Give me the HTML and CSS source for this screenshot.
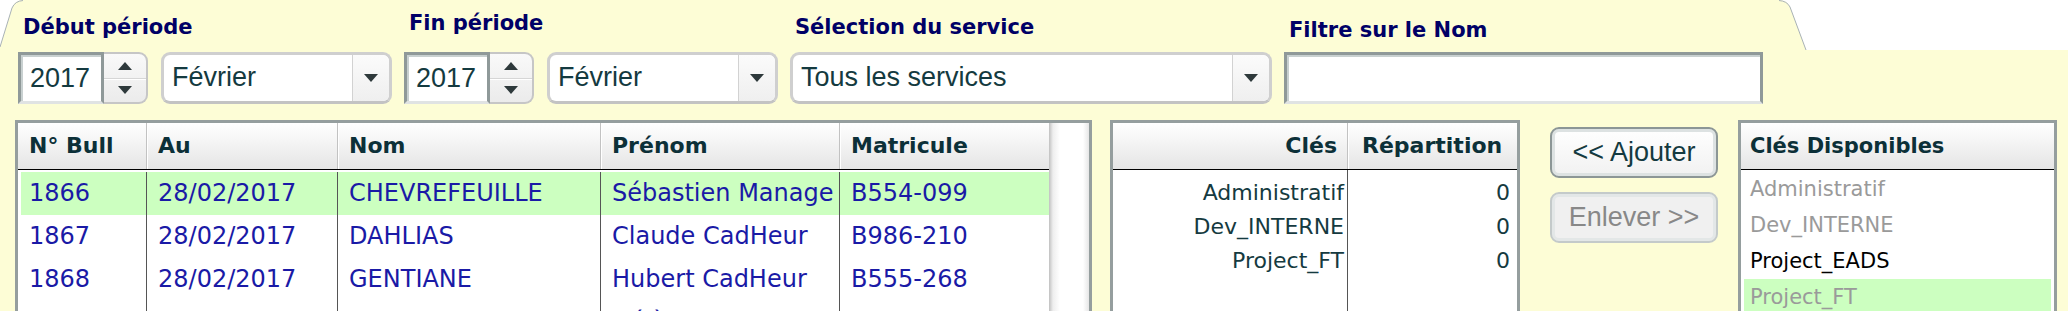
FILE: index.html
```html
<!DOCTYPE html>
<html lang="fr">
<head>
    <meta charset="UTF-8">
    <title>Bulletins - Répartition des clés</title>
    <link rel="stylesheet" href="styles.css">
</head>
<body>

<div class="page">
    <svg class="tab" width="2068" height="311" viewBox="0 0 2068 311">
        <path class="tab-fill" d="M0,47 L12,8 Q15,0 23,0 L1779,0 Q1787,0 1790,7 L1806,50 L2068,50 L2068,311 L0,311 Z"/>
        <path class="tab-edge" d="M0,47 L12,8 Q15,1 23,0.5 M1779,0.5 Q1787,1 1790,7 L1806,50"/>
    </svg>

    <div class="filters">
        <div class="field">
            <label class="field-label">Début période</label>
            <div class="field-controls">
                <div class="spinner">
                    <input class="inset-input spinner-input" type="text" value="2017">
                    <div class="spinner-buttons">
                        <span class="spin-up"></span>
                        <span class="spin-down"></span>
                    </div>
                </div>
                <div class="select select-month">
                    <span class="select-value">Février</span>
                    <span class="select-arrow"></span>
                </div>
            </div>
        </div>

        <div class="field">
            <label class="field-label label-high">Fin période</label>
            <div class="field-controls">
                <div class="spinner">
                    <input class="inset-input spinner-input" type="text" value="2017">
                    <div class="spinner-buttons">
                        <span class="spin-up"></span>
                        <span class="spin-down"></span>
                    </div>
                </div>
                <div class="select select-month">
                    <span class="select-value">Février</span>
                    <span class="select-arrow"></span>
                </div>
            </div>
        </div>

        <div class="field">
            <label class="field-label">Sélection du service</label>
            <div class="field-controls">
                <div class="select select-service">
                    <span class="select-value">Tous les services</span>
                    <span class="select-arrow"></span>
                </div>
            </div>
        </div>

        <div class="field">
            <label class="field-label label-low">Filtre sur le Nom</label>
            <div class="field-controls">
                <input class="inset-input filter-input" type="text" value="">
            </div>
        </div>
    </div>

    <div class="lists">
        <div class="grid bull-grid">
            <div class="bull-main">
                <div class="bull-head">
                    <div class="head-cell">N° Bull</div>
                    <div class="head-cell">Au</div>
                    <div class="head-cell">Nom</div>
                    <div class="head-cell">Prénom</div>
                    <div class="head-cell">Matricule</div>
                </div>
                <div class="bull-body">
                    <div class="bull-row selected">
                        <div>1866</div><div>28/02/2017</div><div>CHEVREFEUILLE</div><div>Sébastien Manage</div><div>B554-099</div>
                    </div>
                    <div class="bull-row">
                        <div>1867</div><div>28/02/2017</div><div>DAHLIAS</div><div>Claude CadHeur</div><div>B986-210</div>
                    </div>
                    <div class="bull-row">
                        <div>1868</div><div>28/02/2017</div><div>GENTIANE</div><div>Hubert CadHeur</div><div>B555-268</div>
                    </div>
                    <div class="bull-row">
                        <div></div><div></div><div></div><div>Hélène Manage</div><div></div>
                    </div>
                </div>
            </div>
            <div class="scrollbar"></div>
        </div>

        <div class="grid cles-grid">
            <div class="cles-head">
                <div class="head-cell head-right">Clés</div>
                <div class="head-cell head-rep">Répartition</div>
            </div>
            <div class="cles-body">
                <div class="cles-col col-key">
                    <div>Administratif</div>
                    <div>Dev_INTERNE</div>
                    <div>Project_FT</div>
                </div>
                <div class="cles-col col-value">
                    <div>0</div>
                    <div>0</div>
                    <div>0</div>
                </div>
            </div>
        </div>

        <div class="actions">
            <button class="btn">&lt;&lt; Ajouter</button>
            <button class="btn btn-disabled" disabled>Enlever &gt;&gt;</button>
        </div>

        <div class="grid dispo-grid">
            <div class="dispo-head">Clés Disponibles</div>
            <div class="dispo-body">
                <div class="dispo-item used">Administratif</div>
                <div class="dispo-item used">Dev_INTERNE</div>
                <div class="dispo-item">Project_EADS</div>
                <div class="dispo-item used selected">Project_FT</div>
            </div>
        </div>
    </div>
</div>

</body>
</html>
```

FILE: styles.css
```css
* {
    box-sizing: border-box;
}

html, body {
    margin: 0;
    padding: 0;
    overflow: hidden;
    background: #fff;
}

body {
    font-family: "DejaVu Sans", Verdana, sans-serif;
    font-size: 22px;
}

.page {
    position: relative;
    z-index: 0;
    width: 2068px;
    height: 311px;
    overflow: hidden;
}

.tab {
    position: absolute;
    top: 0;
    left: 0;
    z-index: -1;
}

.tab-fill {
    fill: #fdfdd6;
}

.tab-edge {
    fill: none;
    stroke: #a9b2b6;
    stroke-width: 1;
}

/* filters */

.filters {
    display: flex;
    gap: 12px;
    padding: 15px 0 0 18px;
}

.field-label {
    display: block;
    padding-left: 5px;
    margin-bottom: 12px;
    font-size: 21px;
    line-height: 25px;
    font-weight: bold;
    color: #000066;
}

.label-high {
    margin-top: -4px;
    margin-bottom: 16px;
}

.label-low {
    margin-top: 3px;
    margin-bottom: 9px;
}

.field-controls {
    display: flex;
    gap: 13px;
}

.inset-input {
    height: 52px;
    margin: 0;
    border: 3px solid #8f9999;
    border-bottom-color: #e0e3e3;
    box-shadow: inset 0 2px 0 #c8d0d0, inset 2px 0 0 #c8d0d0;
    background: #fff;
    font-family: "Liberation Sans", Arial, sans-serif;
    font-size: 27px;
    color: #143a40;
    outline: none;
}

.spinner {
    display: flex;
    width: 130px;
    height: 52px;
}

.spinner-input {
    width: 86px;
    padding: 0 0 0 9px;
}

.spinner-buttons {
    width: 44px;
    display: flex;
    flex-direction: column;
    border: 2px solid #c6c6c6;
    border-left: none;
    border-radius: 0 9px 9px 0;
    background: linear-gradient(#f9f9f9, #ebebeb);
    overflow: hidden;
}

.spinner-buttons span {
    flex: 1;
    display: flex;
    align-items: center;
    justify-content: center;
}

.spin-up {
    border-bottom: 1px solid #d6d6d6;
    box-shadow: 0 1px 0 #fff;
}

.spin-up::before,
.spin-down::before,
.select-arrow::before {
    content: "";
    width: 0;
    height: 0;
    border-left: 7px solid transparent;
    border-right: 7px solid transparent;
}

.spin-up::before {
    border-bottom: 8px solid #2e393b;
}

.spin-down::before {
    border-top: 8px solid #2e393b;
}

.select {
    display: flex;
    height: 52px;
    border: 3px solid #cfcfcf;
    border-bottom-color: #c3c3c3;
    border-radius: 9px;
    background: #fff;
    overflow: hidden;
}

.select-month {
    width: 231px;
}

.select-service {
    width: 482px;
}

.select-value {
    flex: 1;
    padding-left: 8px;
    font-family: "Liberation Sans", Arial, sans-serif;
    font-size: 27px;
    line-height: 45px;
    color: #143a40;
    white-space: nowrap;
}

.select-arrow {
    width: 37px;
    display: flex;
    align-items: center;
    justify-content: center;
    border-left: 1px solid #d2d2d2;
    background: linear-gradient(#fbfbfb, #efefef);
}

.select-arrow::before {
    border-top: 8px solid #2e393b;
}

.filter-input {
    width: 479px;
    padding: 0 8px;
}

/* lists */

.lists {
    display: flex;
    align-items: flex-start;
    padding-left: 15px;
    margin-top: 16px;
}

.grid {
    height: 240px;
    border: 3px solid #959e9e;
    background: #fff;
}

.head-cell {
    height: 46px;
    line-height: 46px;
    padding-left: 11px;
    font-weight: bold;
    color: #0c3038;
    white-space: nowrap;
    border-right: 1px solid #c2c2c2;
    box-shadow: 1px 0 0 #fff;
}

.head-cell:last-child {
    border-right: none;
    box-shadow: none;
}

.bull-grid {
    display: flex;
    width: 1077px;
}

.bull-main {
    width: 1031px;
}

.bull-head,
.cles-head,
.dispo-head {
    background: linear-gradient(#ffffff, #e5e5e5);
    border-bottom: 1px solid #000;
}

.bull-head {
    display: grid;
    grid-template-columns: 129px 191px 263px 239px 209px;
}

.bull-body {
    padding-top: 2px;
}

.bull-row {
    display: grid;
    grid-template-columns: 126px 191px 263px 239px 209px;
    margin-left: 3px;
    height: 43px;
    line-height: 43px;
    font-size: 24px;
    color: #1a1aa6;
}

.bull-row div {
    padding-left: 11px;
    border-right: 1px solid #555;
    white-space: nowrap;
    overflow: hidden;
}

.bull-row div:first-child {
    padding-left: 8px;
}

.bull-row div:last-child {
    border-right: none;
}

.bull-row.selected,
.dispo-item.selected {
    background: #ccffc0;
}

.scrollbar {
    width: 40px;
    background: linear-gradient(to right, #c0c0c0, #eeeeee 4px, #ffffff 11px, #ffffff 34px, #e6e6e6 40px);
}

.cles-grid {
    width: 410px;
    margin-left: 18px;
}

.cles-head {
    display: grid;
    grid-template-columns: 235px 169px;
}

.head-right {
    text-align: right;
    padding: 0 10px 0 0;
}

.head-rep {
    padding-left: 14px;
}

.cles-body {
    display: grid;
    grid-template-columns: 235px 169px;
    height: 100%;
    color: #153a40;
}

.cles-col {
    padding-top: 6px;
    text-align: right;
}

.cles-col div {
    height: 34px;
    line-height: 34px;
}

.col-key {
    border-right: 1px solid #555;
    padding-right: 3px;
}

.col-value {
    padding-right: 7px;
}

.actions {
    display: flex;
    flex-direction: column;
    gap: 14px;
    width: 168px;
    margin-left: 30px;
    padding-top: 7px;
}

.btn {
    height: 51px;
    border: 2px solid #8c9696;
    border-radius: 9px;
    box-shadow: inset 0 0 0 3px #dde2e2;
    background: linear-gradient(#ffffff, #f1f1f1);
    font-family: "Liberation Sans", Arial, sans-serif;
    font-size: 27px;
    color: #143a40;
    padding: 0;
}

.btn-disabled {
    border-color: #c4caca;
    box-shadow: inset 0 0 0 3px #e3e7e7;
    background: #f0f0f0;
    color: #888;
}

.dispo-grid {
    width: 319px;
    margin-left: 20px;
    font-size: 21px;
}

.dispo-head {
    height: 47px;
    line-height: 46px;
    padding-left: 9px;
    font-weight: bold;
    color: #0c3038;
}

.dispo-body {
    padding-top: 1px;
}

.dispo-item {
    height: 36px;
    line-height: 36px;
    margin: 0 3px;
    padding-left: 6px;
    color: #000;
    white-space: nowrap;
}

.dispo-item.used {
    color: #9a9a9a;
}
```
